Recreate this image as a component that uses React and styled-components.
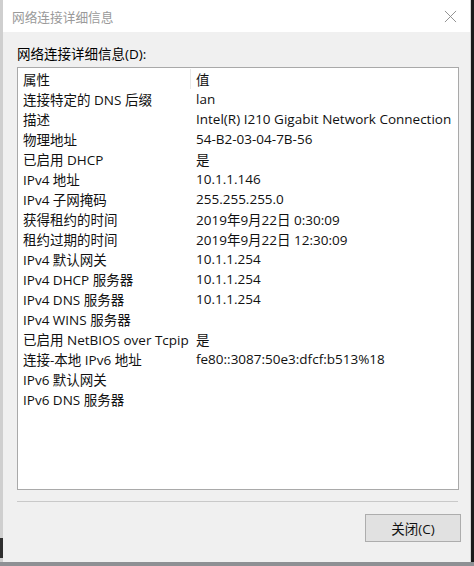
import React from 'react';
import styled, { createGlobalStyle } from 'styled-components';

const GlobalStyle = createGlobalStyle`
  html, body {
    margin: 0;
    padding: 0;
    background: #2b2b2b;
  }
  body {
    font-family: "Segoe UI", "Open Sans", "Noto Sans CJK SC", sans-serif;
  }
`;

// 属性 / 值 数据
const rows = [
  ['连接特定的 DNS 后缀', 'lan'],
  ['描述', 'Intel(R) I210 Gigabit Network Connection'],
  ['物理地址', '54-B2-03-04-7B-56'],
  ['已启用 DHCP', '是'],
  ['IPv4 地址', '10.1.1.146'],
  ['IPv4 子网掩码', '255.255.255.0'],
  ['获得租约的时间', '2019年9月22日 0:30:09'],
  ['租约过期的时间', '2019年9月22日 12:30:09'],
  ['IPv4 默认网关', '10.1.1.254'],
  ['IPv4 DHCP 服务器', '10.1.1.254'],
  ['IPv4 DNS 服务器', '10.1.1.254'],
  ['IPv4 WINS 服务器', ''],
  ['已启用 NetBIOS over Tcpip', '是'],
  ['连接-本地 IPv6 地址', 'fe80::3087:50e3:dfcf:b513%18'],
  ['IPv6 默认网关', ''],
  ['IPv6 DNS 服务器', ''],
];

const App = () => (
  <>
    <GlobalStyle />
    <Screen>
      <Middle>
        <LeftEdge>
          <LeftShade />
        </LeftEdge>
        <Window>
          <TitleBar>
            <Title>网络连接详细信息</Title>
            <CloseIcon viewBox="0 0 14 14">
              <path d="M1 1 L13 13 M13 1 L1 13" stroke="#8a8a8a" strokeWidth="1" fill="none" />
            </CloseIcon>
          </TitleBar>
          <Body>
            <Label>网络连接详细信息(D):</Label>
            <ListBox>
              <Row>
                <NameCell>属性</NameCell>
                <Divider />
                <ValueCell>值</ValueCell>
              </Row>
              {rows.map(([name, value]) => (
                <Row key={name}>
                  <NameCell>{name}</NameCell>
                  <Spacer />
                  <ValueCell>{value}</ValueCell>
                </Row>
              ))}
            </ListBox>
            <Separator />
            <Footer>
              <Button>关闭(C)</Button>
            </Footer>
          </Body>
        </Window>
        <RightEdge />
      </Middle>
      <BottomEdge />
    </Screen>
  </>
);

const Screen = styled.div`
  width: 474px;
  height: 566px;
  display: flex;
  flex-direction: column;
  overflow: hidden;
`;

const Middle = styled.div`
  flex: 1;
  display: flex;
  min-height: 0;
`;

const LeftEdge = styled.div`
  width: 3px;
  flex-shrink: 0;
  background: #cfcfcf;
  display: flex;
  flex-direction: column;
  justify-content: flex-end;
  padding-bottom: 4px;
`;

const LeftShade = styled.div`
  height: 20px;
  background: #2e2e2e;
`;

const RightEdge = styled.div`
  width: 3px;
  flex-shrink: 0;
  background: #1b1b1b;
`;

const BottomEdge = styled.div`
  height: 4px;
  flex-shrink: 0;
  background: #8e9094;
`;

const Window = styled.div`
  flex: 1;
  min-width: 0;
  display: flex;
  flex-direction: column;
  background: #f0f0f0;
  border-right: 1px solid #d6d6d6;
`;

const TitleBar = styled.div`
  height: 32px;
  flex-shrink: 0;
  background: #ffffff;
  display: flex;
  align-items: center;
  justify-content: space-between;
  padding: 0 13px 0 9px;
`;

const Title = styled.span`
  font-family: "Noto Sans CJK SC", sans-serif;
  font-size: 12.7px;
  color: #9a9a9a;
`;

const CloseIcon = styled.svg`
  width: 13px;
  height: 13px;
`;

const Body = styled.div`
  flex: 1;
  display: flex;
  flex-direction: column;
  padding: 12px 9px 0 14px;
`;

const Label = styled.div`
  font-family: "Open Sans", "Noto Sans CJK SC", sans-serif;
  font-size: 13.5px;
  color: #000;
  line-height: 20px;
  margin-bottom: 3px;
`;

const ListBox = styled.div`
  height: 420px;
  background: #fff;
  border: 1px solid #a9a9a9;
  margin-right: 2px;
  padding-top: 1px;
  display: flex;
  flex-direction: column;
  overflow: hidden;
`;

const Row = styled.div`
  display: flex;
  align-items: center;
  height: 20px;
  flex-shrink: 0;
  font-family: "Open Sans", "Noto Sans CJK SC", sans-serif;
  font-size: 13.5px;
  color: #111;
  white-space: nowrap;
`;

const NameCell = styled.div`
  width: 167px;
  flex-shrink: 0;
  padding-left: 5px;
`;

const Divider = styled.div`
  width: 1px;
  height: 20px;
  background: #e8e8e8;
  margin-right: 5px;
`;

const Spacer = styled.div`
  width: 6px;
`;

const ValueCell = styled.div``;

const Separator = styled.div`
  height: 1px;
  background: #c9c9c9;
  margin: 11px 3px 0 0;
`;

const Footer = styled.div`
  display: flex;
  justify-content: flex-end;
  padding-top: 12px;
`;

const Button = styled.div`
  width: 94px;
  height: 26px;
  background: #e1e1e1;
  border: 1px solid #adadad;
  display: flex;
  align-items: center;
  justify-content: center;
  font-family: "Open Sans", "Noto Sans CJK SC", sans-serif;
  font-size: 13.5px;
  color: #111;
`;

export default App;
